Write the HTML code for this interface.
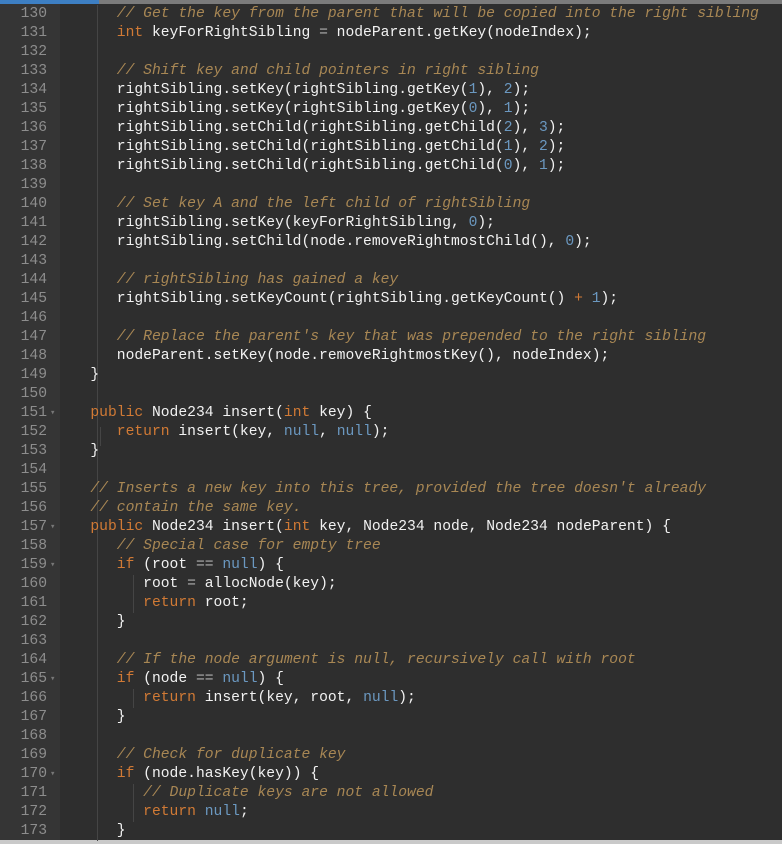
<!DOCTYPE html>
<html><head><meta charset="utf-8"><style>
html,body{margin:0;padding:0;}
body{width:782px;height:844px;overflow:hidden;background:#2e2e2e;position:relative;font-family:"Liberation Mono",monospace;font-size:14.67px;}
#top{position:absolute;left:0;top:0;width:782px;height:4px;background:#7b7b7b;}
#top i{position:absolute;left:0;top:0;width:99px;height:4px;background:#3d7fc3;}
#gut{position:absolute;left:0;top:4px;width:60px;height:836px;background:#353535;}
#bot{position:absolute;left:0;top:840px;width:782px;height:4px;background:#c9c9c9;}
.ln{position:absolute;left:0;width:47px;text-align:right;color:#8d8d8d;height:19px;line-height:19px;}
.f{position:absolute;left:50px;color:#777;font-size:9px;line-height:19px;}
.cl{position:absolute;left:64px;height:19px;line-height:19px;white-space:pre;color:#f2f2f2;}
.k{color:#d17a35}.c{color:#a88754;font-style:italic}.n{color:#6b98c0}.o{color:#b0b0b0}
.g{position:absolute;width:1px;background:#454545;}
</style></head><body>
<div id="top"><i></i></div>
<div id="gut"></div>
<div id="bot"></div>
<div class="g" style="left:97px;top:5px;height:836px"></div>
<div class="g" style="left:107px;top:427px;height:19px;left:100px"></div>
<div class="g" style="left:133px;top:575px;height:38px"></div>
<div class="g" style="left:133px;top:689px;height:19px"></div>
<div class="g" style="left:133px;top:784px;height:38px"></div>
<div id="c"></div>
<script>
var L=[
'      <span class="c">// Get the key from the parent that will be copied into the right sibling</span>',
'      <span class="k">int</span> keyForRightSibling <span class="o">=</span> nodeParent.getKey(nodeIndex);',
'',
'      <span class="c">// Shift key and child pointers in right sibling</span>',
'      rightSibling.setKey(rightSibling.getKey(<span class="n">1</span>), <span class="n">2</span>);',
'      rightSibling.setKey(rightSibling.getKey(<span class="n">0</span>), <span class="n">1</span>);',
'      rightSibling.setChild(rightSibling.getChild(<span class="n">2</span>), <span class="n">3</span>);',
'      rightSibling.setChild(rightSibling.getChild(<span class="n">1</span>), <span class="n">2</span>);',
'      rightSibling.setChild(rightSibling.getChild(<span class="n">0</span>), <span class="n">1</span>);',
'',
'      <span class="c">// Set key A and the left child of rightSibling</span>',
'      rightSibling.setKey(keyForRightSibling, <span class="n">0</span>);',
'      rightSibling.setChild(node.removeRightmostChild(), <span class="n">0</span>);',
'',
'      <span class="c">// rightSibling has gained a key</span>',
'      rightSibling.setKeyCount(rightSibling.getKeyCount() <span class="k">+</span> <span class="n">1</span>);',
'',
'      <span class="c">// Replace the parent\'s key that was prepended to the right sibling</span>',
'      nodeParent.setKey(node.removeRightmostKey(), nodeIndex);',
'   }',
'',
'   <span class="k">public</span> Node234 insert(<span class="k">int</span> key) {',
'      <span class="k">return</span> insert(key, <span class="n">null</span>, <span class="n">null</span>);',
'   }',
'',
'   <span class="c">// Inserts a new key into this tree, provided the tree doesn\'t already</span>',
'   <span class="c">// contain the same key.</span>',
'   <span class="k">public</span> Node234 insert(<span class="k">int</span> key, Node234 node, Node234 nodeParent) {',
'      <span class="c">// Special case for empty tree</span>',
'      <span class="k">if</span> (root <span class="o">==</span> <span class="n">null</span>) {',
'         root <span class="o">=</span> allocNode(key);',
'         <span class="k">return</span> root;',
'      }',
'',
'      <span class="c">// If the node argument is null, recursively call with root</span>',
'      <span class="k">if</span> (node <span class="o">==</span> <span class="n">null</span>) {',
'         <span class="k">return</span> insert(key, root, <span class="n">null</span>);',
'      }',
'',
'      <span class="c">// Check for duplicate key</span>',
'      <span class="k">if</span> (node.hasKey(key)) {',
'         <span class="c">// Duplicate keys are not allowed</span>',
'         <span class="k">return</span> <span class="n">null</span>;',
'      }'
];
var folds={151:1,157:1,159:1,165:1,170:1};
var h='';
for(var i=0;i<L.length;i++){var t=5+i*19,n=130+i;
h+='<div class="ln" style="top:'+t+'px">'+n+'</div>';
if(folds[n])h+='<div class="f" style="top:'+t+'px">&#9662;</div>';
h+='<div class="cl" style="top:'+t+'px">'+L[i]+'</div>';}
document.getElementById('c').innerHTML=h;
</script>
</body></html>
